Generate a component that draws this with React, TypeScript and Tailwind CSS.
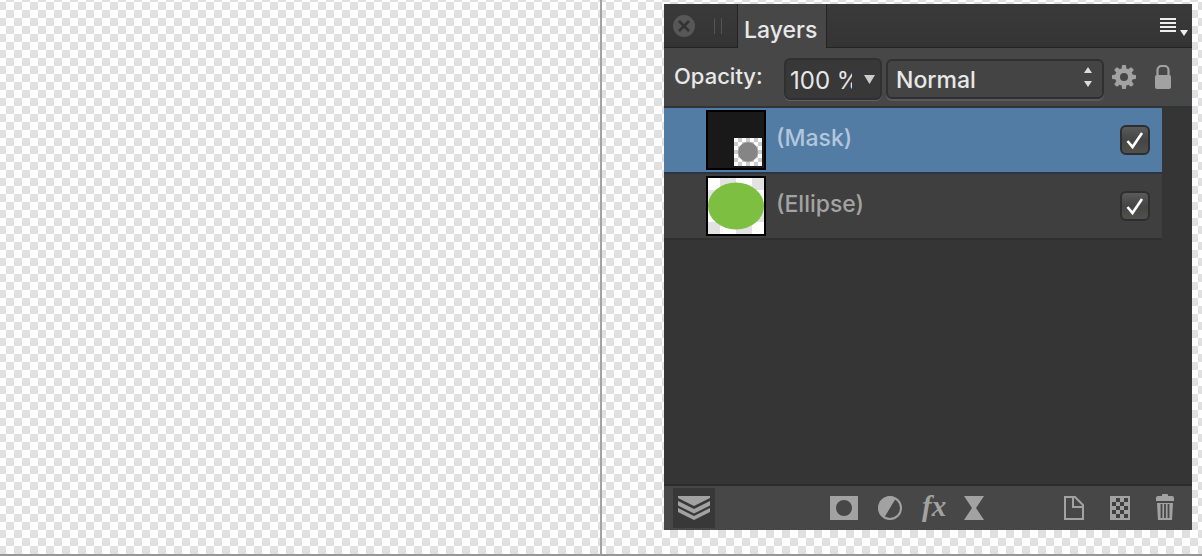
import { useState } from "react";

const checker =
  "bg-[repeating-conic-gradient(#e0e0e0_0_25%,#ffffff_0_50%)] bg-[length:16px_16px] bg-[position:6px_2px]";

const layers = [
  { name: "(Mask)", kind: "mask", selected: true },
  { name: "(Ellipse)", kind: "ellipse", selected: false },
];

function Thumbnail({ kind }: { kind: string }) {
  if (kind === "mask") {
    return (
      <svg viewBox="0 0 60 60" className="w-15 h-15 shrink-0" aria-hidden="true">
        <defs>
          <pattern id="small-checker" width="8" height="8" x="28" y="28" patternUnits="userSpaceOnUse">
            <rect width="8" height="8" fill="#fff" />
            <path d="M4 0h4v4H4zM0 4h4v4H0z" fill="#ccc" />
          </pattern>
        </defs>
        <rect width="60" height="60" fill="#000" />
        <rect x="2" y="2" width="56" height="56" fill="#191919" />
        <rect x="28" y="28" width="28" height="28" fill="url(#small-checker)" />
        <circle cx="42" cy="42" r="10" fill="#858585" />
      </svg>
    );
  }
  return (
    <svg viewBox="0 0 60 60" className="w-15 h-15 shrink-0" aria-hidden="true">
      <rect width="60" height="60" fill="#000" />
      <rect x="2" y="2" width="56" height="56" fill="#fff" />
      <path
        d="M14 2h16v12H14zM46 2h12v12H46zM2 14h12v16H2zM30 14h16v16H30zM14 30h16v16H14zM46 30h12v16H46zM2 46h12v12H2zM30 46h16v12H30z"
        fill="#e2e2e2"
      />
      <ellipse cx="30" cy="30" rx="28" ry="23.5" fill="#7dbf40" />
    </svg>
  );
}

function LayerRow({ name, kind, selected }: { name: string; kind: string; selected: boolean }) {
  const [visible, setVisible] = useState(true);

  return (
    <li
      className={`flex items-center h-16 pl-[42px] pr-3 mb-0.5 ${
        selected
          ? "bg-[#527ca4] text-[#b2c6dc] shadow-[0_2px_0_#2a3642]"
          : "bg-[#3f3f3f] text-[#a3a3a3] shadow-[0_2px_0_#303030]"
      }`}
    >
      <Thumbnail kind={kind} />
      <span className="ml-2.5 flex-1 pb-1 font-medium">{name}</span>
      <label className="relative flex w-[30px] h-[30px]">
        <input
          type="checkbox"
          checked={visible}
          onChange={() => setVisible(!visible)}
          aria-label={`Show ${name}`}
          className="peer appearance-none w-full h-full rounded-md border-2 border-[#2c2e30] bg-linear-to-b from-[#5a5a5a] via-[#454545] to-[#50504c]"
        />
        <svg
          viewBox="0 0 30 30"
          className="absolute inset-0 pointer-events-none hidden peer-checked:block"
          fill="none"
          stroke="#fff"
          strokeWidth="2.6"
          aria-hidden="true"
        >
          <path d="M7.5 16l5 6L22 8" />
        </svg>
      </label>
    </li>
  );
}

export default function App() {
  return (
    <div className={`flex min-h-screen border-b-2 border-[#969696] ${checker} font-[Inter,'Noto_Sans',sans-serif] text-2xl`}>
      {/* Canvas */}
      <main className="flex-1 border-r-2 border-[#a3a3a3]" />

      {/* Panel */}
      <div className="flex w-[calc(50%-1px)] pt-1 pb-6 pl-[62px] pr-2.5">
        <section className="flex flex-1 min-w-0 flex-col bg-[#353535] text-[#e8e8e8]">
          {/* Tab bar */}
          <header className="flex h-11 items-stretch bg-[#474747]">
            <div className="flex w-[74px] items-center gap-[19px] pl-[9px] border-b border-r border-[#232323] bg-linear-to-b from-[#3a3a3a] to-[#343434]">
              <button type="button" aria-label="Close panel">
                <svg viewBox="0 0 22 22" className="w-[22px] h-[22px]" aria-hidden="true">
                  <circle cx="11" cy="11" r="11" fill="#575757" />
                  <path d="M6 6l10 10M16 6L6 16" stroke="#333" strokeWidth="2.6" />
                </svg>
              </button>
              <span className="h-4 w-2 border-x border-[#555]" />
            </div>
            <h1 className="w-[88px] pt-2 pl-1.5 mt-1 leading-7 text-[23px] font-medium">Layers</h1>
            <div className="flex flex-1 items-center justify-end pr-1 border-b border-l border-[#232323] bg-linear-to-b from-[#3a3a3a] to-[#343434]">
              <button type="button" aria-label="Panel menu">
                <svg viewBox="0 0 30 20" className="w-[30px] h-5" aria-hidden="true">
                  <path d="M2 2h16v2H2zM2 6h16v2H2zM2 10h16v2H2zM2 14h16v2H2z" fill="#eee" />
                  <path d="M22 14h8l-4 6z" fill="#eee" />
                </svg>
              </button>
            </div>
          </header>

          {/* Opacity and blend mode */}
          <div className="flex h-15 items-center border-b-2 border-[#303438] bg-[#474747]">
            <label htmlFor="opacity" className="w-[110px] pl-2.5 text-[22px] font-medium">
              Opacity:
            </label>
            <div className="ml-2.5 mr-1 mt-1 flex h-[42px] w-[98px] shrink-0 items-center rounded-md border-2 border-[#303030] bg-[#383838] shadow-[0_1px_0_#606060]">
              <input
                id="opacity"
                defaultValue="100 %"
                className="w-[66px] pt-1 pl-1 outline-none"
              />
              <button type="button" aria-label="Opacity slider" className="ml-3">
                <svg viewBox="0 0 11 9" className="w-[11px] h-[9px]" aria-hidden="true">
                  <path d="M0 0h11L5.5 9z" fill="#ccc" />
                </svg>
              </button>
            </div>
            <div className="relative mt-1 flex-1 min-w-0">
              <select
                aria-label="Blend mode"
                className="block h-10 w-full appearance-none rounded-md border-2 border-[#303030] bg-[#444] pt-0.5 pl-2 text-[23px] font-medium shadow-[0_2px_0_#5a5a5a]"
              >
                <option>Normal</option>
                <option>Multiply</option>
                <option>Screen</option>
              </select>
              <svg
                viewBox="0 0 8 20"
                className="absolute right-3 top-2 w-2 h-5 pointer-events-none"
                aria-hidden="true"
              >
                <path d="M0 6h8L4 0zM0 14h8l-4 6z" fill="#ddd" />
              </svg>
            </div>
            <button type="button" aria-label="Blend options" className="ml-2">
              <svg viewBox="0 0 24 24" className="w-6 h-6" aria-hidden="true">
                <g fill="#a2a2a2">
                  {[0, 45, 90, 135].map((angle) => (
                    <path key={angle} d="M9.8 2L10.2 0h3.6l.4 2v20l-.4 2h-3.6l-.4-2z" transform={`rotate(${angle} 12 12)`} />
                  ))}
                  <circle cx="12" cy="12" r="9" />
                </g>
                <circle cx="12" cy="12" r="4" fill="#474747" />
              </svg>
            </button>
            <button type="button" aria-label="Lock layer" className="ml-[18px] mr-5">
              <svg viewBox="0 0 18 26" className="w-[18px] h-[26px]" aria-hidden="true">
                <path d="M3.5 13V6a4 4 0 0 1 4-4h3a4 4 0 0 1 4 4v7" fill="none" stroke="#a2a2a2" strokeWidth="2.2" />
                <rect x="1" y="11" width="16" height="14" rx="2" fill="#a2a2a2" />
              </svg>
            </button>
          </div>

          <ul className="mr-[30px] flex-1 text-[23px]">
            {layers.map((layer) => (
              <LayerRow key={layer.name} {...layer} />
            ))}
          </ul>

          {/* Layer tools */}
          <footer className="flex h-[46px] items-center border-t-2 border-[#2c2c2c] bg-[#474747] pl-[9px] pr-[18px] text-[#a2a2a2]">
            <button type="button" aria-label="Edit all layers" className="bg-[#383838] px-[5px] py-2">
              <svg viewBox="0 0 32 24" className="w-8 h-6" fill="currentColor" aria-hidden="true">
                <path d="M0 0h32v2L16 10 0 2zM0 5l16 8 16-8v4.500L16 17.500 0 9.500zM0 12l16 8 16-8v4L16 24 0 16z" />
              </svg>
            </button>
            <div className="ml-auto flex items-center">
              <button type="button" aria-label="Mask layer">
                <svg viewBox="0 0 28 24" className="w-7 h-6" aria-hidden="true">
                  <path d="M0 0h28v24H0z" fill="currentColor" />
                  <circle cx="14" cy="12" r="8" fill="#474747" />
                </svg>
              </button>
              <button type="button" aria-label="Adjustments" className="ml-5">
                <svg viewBox="0 0 24 24" className="w-6 h-6" aria-hidden="true">
                  <circle cx="12" cy="12" r="11" fill="none" stroke="currentColor" strokeWidth="2" />
                  <path d="M18 2A11.500 11.500 0 1 0 6 22z" fill="currentColor" />
                </svg>
              </button>
              <button
                type="button"
                aria-label="Layer effects"
                className="ml-5 w-7 text-left font-['Liberation_Serif',serif] text-[29px] leading-7 font-bold italic pb-1"
              >
                fx
              </button>
              <button type="button" aria-label="Live filters" className="ml-3.5">
                <svg viewBox="0 0 20 24" className="w-5 h-6" fill="currentColor" aria-hidden="true">
                  <path d="M0 0h20l-8 12 8 12H0l8-12z" />
                </svg>
              </button>
            </div>
            <div className="ml-20 flex items-center">
              <button type="button" aria-label="New layer">
                <svg viewBox="0 0 20 24" className="w-5 h-6" fill="none" stroke="currentColor" strokeWidth="2" aria-hidden="true">
                  <path d="M1 1h10l8 8v14H1zM9 1v10h10" />
                </svg>
              </button>
              <button type="button" aria-label="New pixel layer" className="ml-[26px]">
                <svg viewBox="0 0 20 24" className="w-5 h-6" aria-hidden="true">
                  <path d="M0 0h20v24H0z" fill="currentColor" />
                  <path
                    d="M6 2h4v4H6zM14 2h4v4h-4zM2 6h4v4H2zM10 6h4v4h-4zM6 10h4v4H6zM14 10h4v4h-4zM2 14h4v4H2zM10 14h4v4h-4zM6 18h4v4H6zM14 18h4v4h-4z"
                    fill="#404040"
                  />
                </svg>
              </button>
              <button type="button" aria-label="Delete layer" className="ml-[26px]">
                <svg viewBox="1 0 18 28" className="w-[18px] h-7" aria-hidden="true">
                  <path d="M1 7V4q0-2 2-2h4V1q0-1 1-1h4q1 0 1 1v1h4q2 0 2 2v3z" fill="currentColor" />
                  <path d="M2 9h16l-1 17H3z" fill="currentColor" />
                  <path d="M6.500 10v14M10 10v14M13.500 10v14" stroke="#474747" strokeWidth="1.8" />
                </svg>
              </button>
            </div>
          </footer>
        </section>
      </div>
    </div>
  );
}
